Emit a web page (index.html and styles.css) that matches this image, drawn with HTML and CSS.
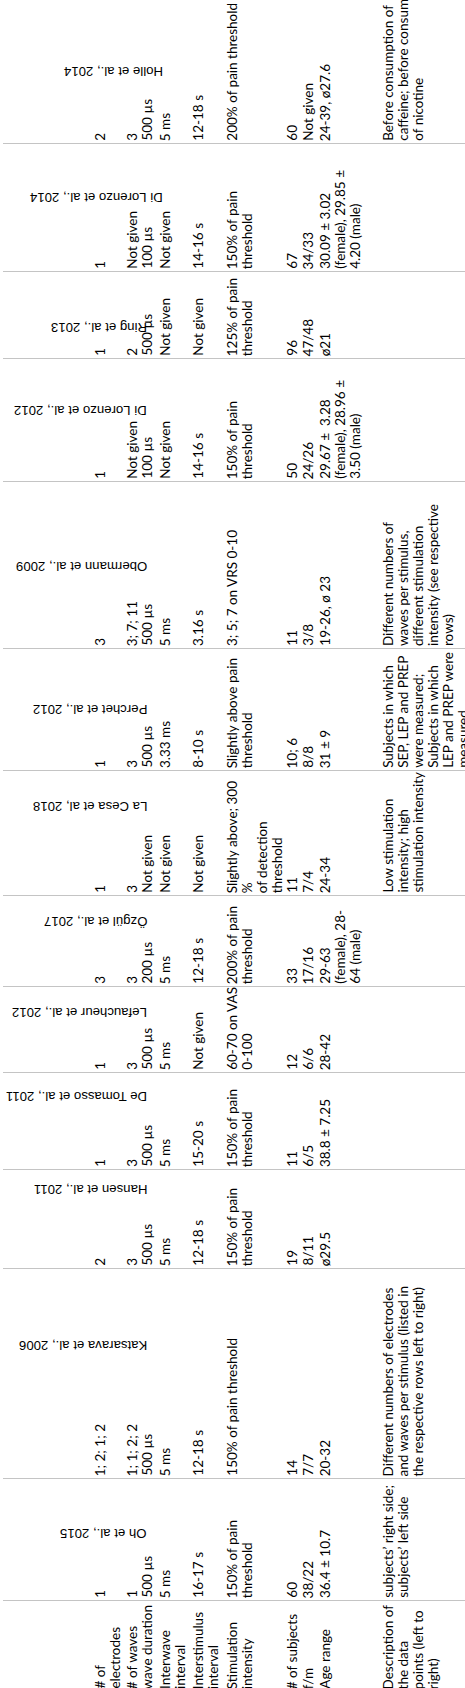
FILE: index.html
```html
<!DOCTYPE html>
<html lang="en">
<head>
<meta charset="utf-8">
<title>Study parameters</title>
<link rel="stylesheet" href="styles.css">
</head>
<body>
<div class="table">
  <div class="band b-holle">
    <div class="name name-wide">Holle et al., 2014</div>
    <div class="cell c1">2</div>
    <div class="cell c2">3</div>
    <div class="cell c3">500 µs</div>
    <div class="cell c4">5 ms</div>
    <div class="cell c5">12-18 s</div>
    <div class="cell c6">200% of pain threshold</div>
    <div class="cell c7">60</div>
    <div class="cell c8">Not given</div>
    <div class="cell c9">24-39, ø27.6</div>
    <div class="cell c10">Before consumption of<br>caffeine; before consumption<br>of nicotine</div>
  </div>
  <div class="band b-dl14">
    <div class="name name-wide">Di Lorenzo et al., 2014</div>
    <div class="cell c1">1</div>
    <div class="cell c2">Not given</div>
    <div class="cell c3">100 µs</div>
    <div class="cell c4">Not given</div>
    <div class="cell c5">14-16 s</div>
    <div class="cell c6">150% of pain<br>threshold</div>
    <div class="cell c7">67</div>
    <div class="cell c8">34/33</div>
    <div class="cell c9">30.09 ± 3.02<br>(female), 29.85 ±<br>4.20 (male)</div>
  </div>
  <div class="band b-ring">
    <div class="name">Ring et al., 2013</div>
    <div class="cell c1">1</div>
    <div class="cell c2">2</div>
    <div class="cell c3">500 µs</div>
    <div class="cell c4">Not given</div>
    <div class="cell c5">Not given</div>
    <div class="cell c6">125% of pain<br>threshold</div>
    <div class="cell c7">96</div>
    <div class="cell c8">47/48</div>
    <div class="cell c9">ø21</div>
  </div>
  <div class="band b-dl12">
    <div class="name">Di Lorenzo et al., 2012</div>
    <div class="cell c1">1</div>
    <div class="cell c2">Not given</div>
    <div class="cell c3">100 µs</div>
    <div class="cell c4">Not given</div>
    <div class="cell c5">14-16 s</div>
    <div class="cell c6">150% of pain<br>threshold</div>
    <div class="cell c7">50</div>
    <div class="cell c8">24/26</div>
    <div class="cell c9">29.67 ±&nbsp; 3.28<br>(female), 28.96 ±<br>3.50 (male)</div>
  </div>
  <div class="band b-obermann">
    <div class="name">Obermann et al., 2009</div>
    <div class="cell c1">3</div>
    <div class="cell c2">3; 7; 11</div>
    <div class="cell c3">500 µs</div>
    <div class="cell c4">5 ms</div>
    <div class="cell c5">3.16 s</div>
    <div class="cell c6">3; 5; 7 on VRS 0-10</div>
    <div class="cell c7">11</div>
    <div class="cell c8">3/8</div>
    <div class="cell c9">19-26, ø 23</div>
    <div class="cell c10">Different numbers of<br>waves per stimulus,<br>different stimulation<br>intensity (see respective<br>rows)</div>
  </div>
  <div class="band b-perchet">
    <div class="name">Perchet et al., 2012</div>
    <div class="cell c1">1</div>
    <div class="cell c2">3</div>
    <div class="cell c3">500 µs</div>
    <div class="cell c4">3.33 ms</div>
    <div class="cell c5">8-10 s</div>
    <div class="cell c6">Slightly above pain<br>threshold</div>
    <div class="cell c7">10; 6</div>
    <div class="cell c8">8/8</div>
    <div class="cell c9">31 ± 9</div>
    <div class="cell c10">Subjects in which<br>SEP, LEP and PREP<br>were measured;<br>Subjects in which<br>LEP and PREP were<br>measured</div>
  </div>
  <div class="band b-lacesa">
    <div class="name">La Cesa et al, 2018</div>
    <div class="cell c1">1</div>
    <div class="cell c2">3</div>
    <div class="cell c3">Not given</div>
    <div class="cell c4">Not given</div>
    <div class="cell c5">Not given</div>
    <div class="cell c6">Slightly above; 300<br>%<br>of detection<br>threshold</div>
    <div class="cell c7">11</div>
    <div class="cell c8">7/4</div>
    <div class="cell c9">24-34</div>
    <div class="cell c10">Low stimulation<br>intensity; high<br>stimulation intensity</div>
  </div>
  <div class="band b-ozgul">
    <div class="name">Özgül et al., 2017</div>
    <div class="cell c1">3</div>
    <div class="cell c2">3</div>
    <div class="cell c3">200 µs</div>
    <div class="cell c4">5 ms</div>
    <div class="cell c5">12-18 s</div>
    <div class="cell c6">200% of pain<br>threshold</div>
    <div class="cell c7">33</div>
    <div class="cell c8">17/16</div>
    <div class="cell c9">29-63<br>(female), 28-<br>64 (male)</div>
  </div>
  <div class="band b-lefaucheur">
    <div class="name">Lefaucheur et al., 2012</div>
    <div class="cell c1">1</div>
    <div class="cell c2">3</div>
    <div class="cell c3">500 µs</div>
    <div class="cell c4">5 ms</div>
    <div class="cell c5">Not given</div>
    <div class="cell c6">60-70 on VAS<br>0-100</div>
    <div class="cell c7">12</div>
    <div class="cell c8">6/6</div>
    <div class="cell c9">28-42</div>
  </div>
  <div class="band b-detomasso">
    <div class="name">De Tomasso et al., 2011</div>
    <div class="cell c1">1</div>
    <div class="cell c2">3</div>
    <div class="cell c3">500 µs</div>
    <div class="cell c4">5 ms</div>
    <div class="cell c5">15-20 s</div>
    <div class="cell c6">150% of pain<br>threshold</div>
    <div class="cell c7">11</div>
    <div class="cell c8">6/5</div>
    <div class="cell c9">38.8 ± 7.25</div>
  </div>
  <div class="band b-hansen">
    <div class="name">Hansen et al., 2011</div>
    <div class="cell c1">2</div>
    <div class="cell c2">3</div>
    <div class="cell c3">500 µs</div>
    <div class="cell c4">5 ms</div>
    <div class="cell c5">12-18 s</div>
    <div class="cell c6">150% of pain<br>threshold</div>
    <div class="cell c7">19</div>
    <div class="cell c8">8/11</div>
    <div class="cell c9">ø29.5</div>
  </div>
  <div class="band b-katsarava">
    <div class="name">Katsarava et al., 2006</div>
    <div class="cell c1">1; 2; 1; 2</div>
    <div class="cell c2">1; 1; 2; 2</div>
    <div class="cell c3">500 µs</div>
    <div class="cell c4">5 ms</div>
    <div class="cell c5">12-18 s</div>
    <div class="cell c6">150% of pain threshold</div>
    <div class="cell c7">14</div>
    <div class="cell c8">7/7</div>
    <div class="cell c9">20-32</div>
    <div class="cell c10">Different numbers of electrodes<br>and waves per stimulus (listed in<br>the respective rows left to right)</div>
  </div>
  <div class="band b-oh">
    <div class="name">Oh et al., 2015</div>
    <div class="cell c1">1</div>
    <div class="cell c2">1</div>
    <div class="cell c3">500 µs</div>
    <div class="cell c4">5 ms</div>
    <div class="cell c5">16-17 s</div>
    <div class="cell c6">150% of pain<br>threshold</div>
    <div class="cell c7">60</div>
    <div class="cell c8">38/22</div>
    <div class="cell c9">36.4 ± 10.7</div>
    <div class="cell c10">subjects’ right side;<br>subjects’ left side</div>
  </div>
  <div class="band labels">
    <div class="cell c1"># of<br>electrodes</div>
    <div class="cell c2"># of waves</div>
    <div class="cell c3">wave duration</div>
    <div class="cell c4">Interwave<br>interval</div>
    <div class="cell c5">Interstimulus<br>interval</div>
    <div class="cell c6">Stimulation<br>intensity</div>
    <div class="cell c7"># of subjects</div>
    <div class="cell c8">f/m</div>
    <div class="cell c9">Age range</div>
    <div class="cell c10">Description of<br>the data<br>points (left to<br>right)</div>
  </div>
</div>
</body>
</html>
```
FILE: styles.css
```css
html, body {
  margin: 0;
  padding: 0;
  background: #ffffff;
  overflow: hidden;
}

body {
  font-family: Lato, "Liberation Sans", sans-serif;
  color: #000000;
}

.table {
  display: flex;
  flex-direction: column;
  margin-left: 3px;
}

.band {
  flex: none;
  box-sizing: border-box;
  display: grid;
  grid-template-columns: 90px 32px 15px 18px 33px 34px 60px 16px 17px 63px 1fr;
  grid-template-rows: minmax(0, 1fr);
  border-bottom: 1px solid #c4c4c4;
}

.cell {
  grid-row: 1;
  writing-mode: vertical-rl;
  text-orientation: sideways;
  transform: rotate(180deg);
  align-self: end;
  justify-self: start;
  margin-bottom: 2px;
  font-size: 13.5px;
  line-height: 15px;
  white-space: nowrap;
}

.c1 { grid-column: 2; }
.c2 { grid-column: 3; }
.c3 { grid-column: 4; }
.c4 { grid-column: 5; }
.c5 { grid-column: 6; }
.c6 { grid-column: 7; }
.c7 { grid-column: 8; }
.c8 { grid-column: 9; }
.c9 { grid-column: 10; }
.c10 { grid-column: 11; }

.name {
  grid-row: 1;
  grid-column: 1 / 5;
  justify-self: end;
  align-self: start;
  margin-right: 11px;
  transform: rotate(180deg);
  font-family: "Liberation Sans", Arial, sans-serif;
  font-size: 13.2px;
  line-height: 15px;
  white-space: nowrap;
}

.name-wide {
  grid-column: 1 / 6;
  margin-right: 28px;
}

.b-holle { height: 144px; }
.b-holle .name { margin-top: 64px; }

.b-dl14 { height: 128px; }
.b-dl14 .name { margin-top: 46px; }

.b-ring { height: 87px; }
.b-ring .name { margin-top: 48px; }

.b-dl12 { height: 123px; }
.b-dl12 .name { margin-top: 44px; }

.b-obermann { height: 167px; }
.b-obermann .name { margin-top: 77px; }

.b-perchet { height: 122px; }
.b-perchet .name { margin-top: 53px; }

.b-lacesa { height: 125px; }
.b-lacesa .name { margin-top: 28px; }

.b-ozgul { height: 91px; }
.b-ozgul .name { margin-top: 18px; }

.b-lefaucheur { height: 86px; }
.b-lefaucheur .name { margin-top: 18px; }

.b-detomasso { height: 97px; }
.b-detomasso .name { margin-top: 16px; }

.b-hansen { height: 99px; }
.b-hansen .name { margin-top: 12px; }

.b-katsarava { height: 210px; }
.b-katsarava .name { margin-top: 69px; }

.b-oh { height: 122px; }
.b-oh .name { margin-top: 47px; }

.labels {
  height: 90px;
  border-bottom: none;
}
```
